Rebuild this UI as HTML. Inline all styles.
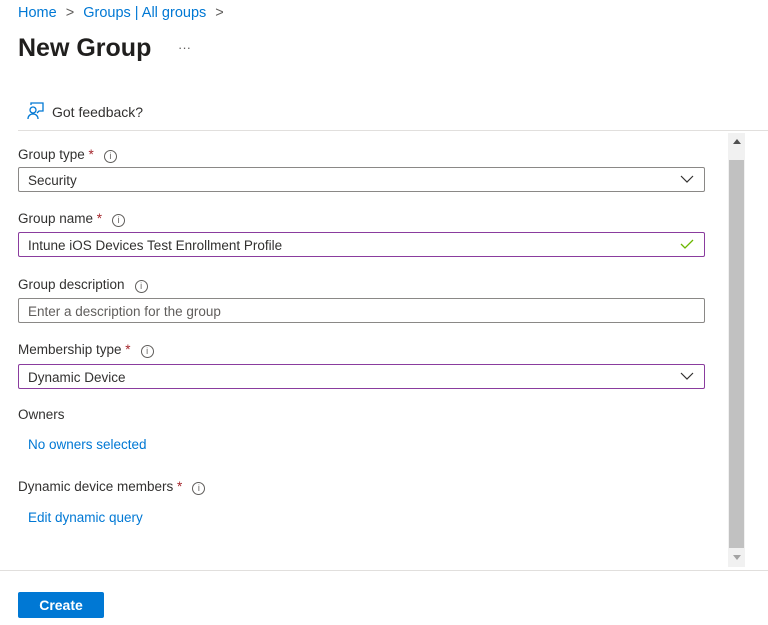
<!DOCTYPE html>
<html><head><style>
*{box-sizing:border-box;margin:0;padding:0}
body{width:768px;height:625px;background:#fff;font-family:"Liberation Sans",sans-serif;color:#323130;position:relative;overflow:hidden;font-size:13.5px}
.a{position:absolute;white-space:nowrap}
.link{color:#0078d4}
.lbl{font-size:13.5px;color:#323130}
.req{color:#a4262c}
.info{display:inline-block;width:13px;height:13px;border:1px solid #605e5c;border-radius:50%;font-size:9px;line-height:11px;text-align:center;color:#605e5c;vertical-align:0px;margin-left:10px}
.inp{position:absolute;left:18px;width:687px;height:25px;border:1px solid #8a8886;border-radius:2px;padding:5px 9px;font-size:13.5px;line-height:15px}
.purple{border-color:#8a3c9e}
.chev{position:absolute;right:10px;top:6px}
</style></head><body>
<div class="a link" style="left:18px;top:5px;font-size:14.5px">Home <span style="color:#605e5c;margin:0 5px">&gt;</span> Groups | All groups <span style="color:#605e5c;margin-left:5px">&gt;</span></div>
<div class="a" style="left:18px;top:34px;font-size:25px;font-weight:bold;color:#201f1e">New Group</div>
<div class="a" style="left:178px;top:40px;font-size:13px;color:#605e5c">···</div>
<svg class="a" style="left:26px;top:102px" width="18" height="18" viewBox="0 0 18 18" fill="none" stroke="#0078d4" stroke-width="1.3"><circle cx="7" cy="8" r="3"/><path d="M2 17c0-3 2-5 5-5s5 2 5 5"/><path d="M5 3V1h12v8h-4l-2 2"/></svg>
<div class="a" style="left:52px;top:104px;font-size:14px">Got feedback?</div>
<div class="a" style="left:18px;top:130px;width:750px;height:1px;background:#e1dfdd"></div>

<div class="a lbl" style="left:18px;top:147px">Group type <span class="req">*</span><span class="info">i</span></div>
<div class="inp" style="top:167px">Security<svg class="chev" width="14" height="10"><path d="M1 2l6 6 6-6" stroke="#323130" fill="none" stroke-width="1.2"/></svg></div>

<div class="a lbl" style="left:18px;top:211px">Group name <span class="req">*</span><span class="info">i</span></div>
<div class="inp purple" style="top:232px">Intune iOS Devices Test Enrollment Profile<svg class="chev" width="14" height="10"><path d="M1 5l4 4 8-8" stroke="#6bb700" fill="none" stroke-width="1.3"/></svg></div>

<div class="a lbl" style="left:18px;top:277px">Group description<span class="info">i</span></div>
<div class="inp" style="top:298px;color:#605e5c">Enter a description for the group</div>

<div class="a lbl" style="left:18px;top:342px">Membership type <span class="req">*</span><span class="info">i</span></div>
<div class="inp purple" style="top:364px">Dynamic Device<svg class="chev" width="14" height="10"><path d="M1 2l6 6 6-6" stroke="#323130" fill="none" stroke-width="1.2"/></svg></div>

<div class="a lbl" style="left:18px;top:407px">Owners</div>
<div class="a link" style="left:28px;top:437px">No owners selected</div>
<div class="a lbl" style="left:18px;top:479px">Dynamic device members <span class="req">*</span><span class="info">i</span></div>
<div class="a link" style="left:28px;top:510px">Edit dynamic query</div>

<div class="a" style="left:728px;top:133px;width:17px;height:434px;background:#f1f1f1"></div>
<div class="a" style="left:729px;top:160px;width:15px;height:388px;background:#c1c1c1"></div>
<div class="a" style="left:733px;top:139px;width:0;height:0;border-left:4px solid transparent;border-right:4px solid transparent;border-bottom:5px solid #505050"></div>
<div class="a" style="left:733px;top:555px;width:0;height:0;border-left:4px solid transparent;border-right:4px solid transparent;border-top:5px solid #a3a3a3"></div>
<div class="a" style="left:0;top:570px;width:768px;height:1px;background:#e1dfdd"></div>
<div class="a" style="left:18px;top:592px;width:86px;height:26px;background:#0078d4;border-radius:2px;color:#fff;font-weight:bold;font-size:14px;text-align:center;line-height:26px">Create</div>
</body></html>
